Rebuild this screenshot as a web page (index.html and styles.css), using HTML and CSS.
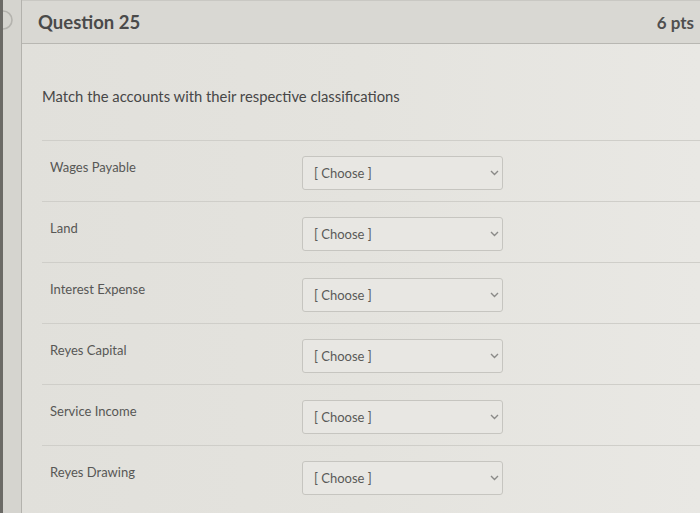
FILE: index.html
```html
<!DOCTYPE html>
<html>
<head>
<meta charset="utf-8">
<link rel="stylesheet" href="styles.css">
</head>
<body>
<div class="page">
  <div class="rail">
    <svg class="rail-icon" width="18" height="40" viewBox="0 0 18 40"><path d="M0 11 A9 9 0 0 1 0 29" fill="none" stroke="#b4b3ae" stroke-width="1.6"/></svg>
  </div>
  <div class="card">
    <div class="card-header">
      <span class="q-title">Question 25</span>
      <span class="q-pts">6 pts</span>
    </div>
    <div class="card-body">
      <p class="q-text">Match the accounts with their respective classifications</p>
      <div class="rows">
        <div class="row"><div class="label">Wages Payable</div><div class="select"><span>[ Choose ]</span><svg class="chev" width="9" height="6" viewBox="0 0 9 6"><path d="M1 1 L4.5 4.5 L8 1" fill="none" stroke="#8a8a88" stroke-width="1.4"/></svg></div></div>
        <div class="row"><div class="label">Land</div><div class="select"><span>[ Choose ]</span><svg class="chev" width="9" height="6" viewBox="0 0 9 6"><path d="M1 1 L4.5 4.5 L8 1" fill="none" stroke="#8a8a88" stroke-width="1.4"/></svg></div></div>
        <div class="row"><div class="label">Interest Expense</div><div class="select"><span>[ Choose ]</span><svg class="chev" width="9" height="6" viewBox="0 0 9 6"><path d="M1 1 L4.5 4.5 L8 1" fill="none" stroke="#8a8a88" stroke-width="1.4"/></svg></div></div>
        <div class="row"><div class="label">Reyes Capital</div><div class="select"><span>[ Choose ]</span><svg class="chev" width="9" height="6" viewBox="0 0 9 6"><path d="M1 1 L4.5 4.5 L8 1" fill="none" stroke="#8a8a88" stroke-width="1.4"/></svg></div></div>
        <div class="row"><div class="label">Service Income</div><div class="select"><span>[ Choose ]</span><svg class="chev" width="9" height="6" viewBox="0 0 9 6"><path d="M1 1 L4.5 4.5 L8 1" fill="none" stroke="#8a8a88" stroke-width="1.4"/></svg></div></div>
        <div class="row"><div class="label">Reyes Drawing</div><div class="select"><span>[ Choose ]</span><svg class="chev" width="9" height="6" viewBox="0 0 9 6"><path d="M1 1 L4.5 4.5 L8 1" fill="none" stroke="#8a8a88" stroke-width="1.4"/></svg></div></div>
      </div>
    </div>
  </div>
</div>
</body>
</html>
```

FILE: styles.css
```css
html, body {
  margin: 0;
  padding: 0;
  height: 100%;
}
body {
  background: #dcdbd6;
  font-family: Lato, "Open Sans", sans-serif;
  color: #4a4a4a;
  overflow: hidden;
}
.page {
  display: flex;
  height: 513px;
}
.rail {
  width: 21px;
  flex: none;
  background: #d5d4cf;
  border-left: 3px solid #6b6a66;
  box-sizing: border-box;
}
.rail-icon {
  display: block;
}
.card {
  flex: 1;
  border-left: 1.5px solid #b3b2ad;
  background: linear-gradient(90deg, #e1e0db 0%, #e4e3de 50%, #e9e8e4 100%);
  display: flex;
  flex-direction: column;
}
.card-header {
  height: 44px;
  flex: none;
  display: flex;
  align-items: center;
  justify-content: space-between;
  padding: 0 6px 0 16px;
  background: #d9d8d3;
  border-top: 1px solid #c9c8c3;
  border-bottom: 1px solid #b8b7b2;
  box-sizing: border-box;
}
.q-title {
  font-size: 18.5px;
  font-weight: 700;
  color: #4a4a4a;
}
.q-pts {
  font-size: 17px;
  font-weight: 700;
  color: #4f4f4f;
}
.card-body {
  padding: 0 0 0 20px;
  flex: 1;
}
.q-text {
  margin: 42px 0 34px;
  font-size: 14.8px;
  line-height: 20px;
  color: #474747;
}
.row {
  display: flex;
  align-items: flex-start;
  border-top: 1px solid #cfcec9;
  padding: 15px 0 11px;
}
.label {
  width: 252px;
  flex: none;
  padding: 3px 0 0 8px;
  font-size: 13px;
  line-height: 16px;
  color: #575755;
}
.select {
  width: 201px;
  height: 34px;
  box-sizing: border-box;
  border: 1px solid #c6c5c0;
  border-radius: 3px;
  background: #e8e7e3;
  display: flex;
  align-items: center;
  justify-content: space-between;
  padding: 0 3px 0 11px;
  font-size: 13px;
  color: #5a5a58;
}
.chev {
  display: block;
}
```
